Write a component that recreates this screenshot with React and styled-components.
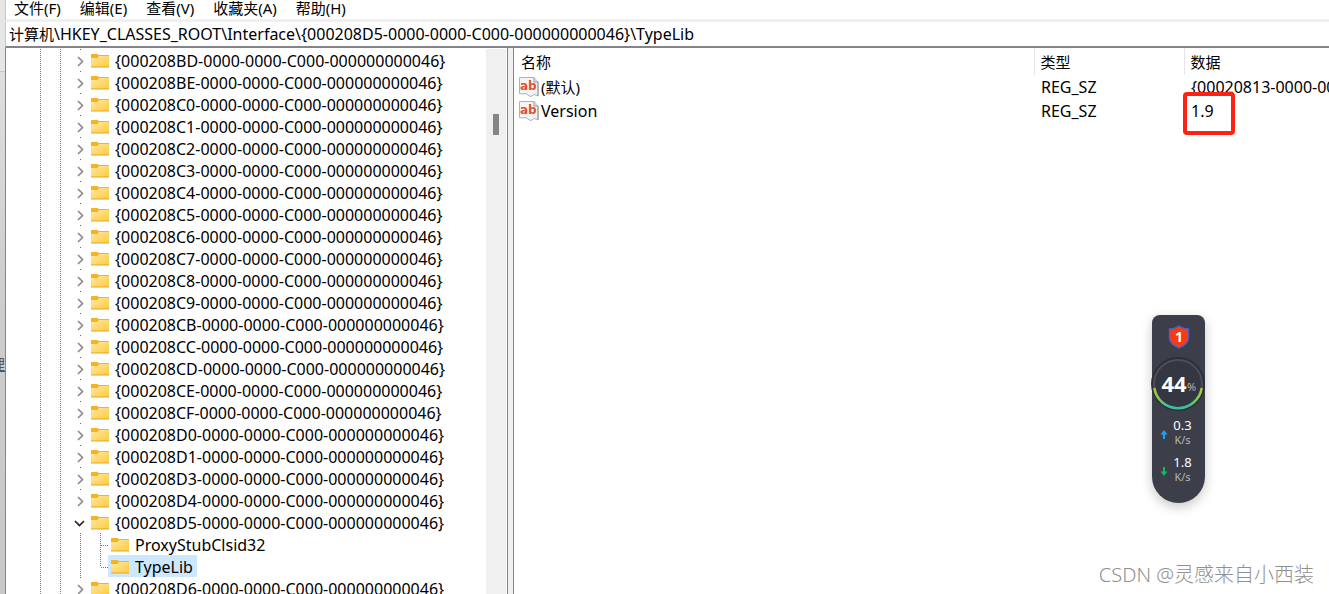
import React from 'react';
import styled, { createGlobalStyle, css } from 'styled-components';

const Global = createGlobalStyle`
  * { box-sizing: border-box; }
  html, body { margin: 0; height: 100%; overflow: hidden; }
  #root { height: 100%; }
  body {
    font-family: 'Noto Sans', 'Noto Sans CJK SC', sans-serif;
    font-size: 16px;
    line-height: 22px;
    color: #000;
    background: #fff;
  }
  button { font: inherit; color: inherit; border: 0; padding: 0; background: none; text-align: left; }
`;

const Screen = styled.div`
  position: relative;
  display: flex;
  height: 100vh;
  overflow: hidden;
`;

const Backdrop = styled.div`
  flex: none;
  width: 5px;
  overflow: hidden;
  display: flex;
  flex-direction: column;
  background: linear-gradient(#e4e4e4, #cdcdcd 50%, #c8c8c8);
`;

const BackdropTop = styled.div`
  height: 72px;
  border-bottom: 1px solid #c4c4c4;
  background: #e6e6e6;
`;

const BackdropText = styled.span`
  margin-top: 281px;
  align-self: flex-end;
  font-size: 15px;
  color: #555;
  text-decoration: underline;
`;

const Window = styled.main`
  flex: 1;
  min-width: 0;
  display: flex;
  flex-direction: column;
`;

const MenuBar = styled.nav`
  flex: none;
  display: flex;
  gap: 19px;
  height: 22px;
  padding: 0 8px;
  border-left: 1px solid #c6c6ca;
  border-bottom: 3px solid #f0f0f0;
`;

const MenuItem = styled.button`
  height: 16px;
  font-size: 15px;
  line-height: 16px;
  white-space: nowrap;
`;

const Address = styled.div`
  flex: none;
  height: 26px;
  padding: 1px 3px;
  border-left: 1px solid #c6c6ca;
  border-bottom: 2px solid #84848a;
  white-space: nowrap;
`;

const Han = styled.span`
  font-size: 15px;
`;

const Panes = styled.div`
  flex: 1;
  min-height: 0;
  display: flex;
  border-left: 1px solid #84848a;
`;

const TreePane = styled.section`
  flex: none;
  width: 502px;
  display: flex;
  border-right: 1px solid #84848a;
`;

const Tree = styled.ul`
  flex: 1;
  margin: 0;
  padding: 1px 0 0;
  list-style: none;
  overflow: hidden;
`;

const dots = 'repeating-linear-gradient(#777 0 1px, transparent 1px 2px)';

const TreeRow = styled.li`
  display: flex;
  height: 22px;
  padding-left: 54px;
  background: ${dots} 34px 0 / 1px 100% no-repeat, ${dots} 54px 0 / 1px 100% no-repeat;
`;

const Guide = styled.svg`
  flex: none;
  width: 48px;
  height: 22px;
`;

const Toggle = styled.button`
  flex: none;
  width: 30px;
  height: 22px;

  svg { display: block; }
`;

const TreeLabel = styled.button`
  display: flex;
  align-items: center;
  gap: 5px;
  padding: 2px 4px 0 ${(p) => (p.$child ? 3 : 1)}px;
  line-height: 20px;
  white-space: nowrap;
  border-radius: 1px;
  ${(p) => p.$selected && css`background: #cce8ff;`}
`;

const FolderSvg = styled.svg`
  flex: none;
  width: 19px;
  height: 16px;
`;

const ScrollTrack = styled.div`
  flex: none;
  width: 20px;
  margin: 1px 1px 0 0;
  padding-top: 65px;
  background: #f0f0f0;
`;

const ScrollThumb = styled.div`
  width: 6px;
  height: 21px;
  margin-left: 7px;
  background: #858585;
`;

const Splitter = styled.div`
  flex: none;
  width: 5px;
  background: #f0f0f0;
`;

const ValuePane = styled.section`
  flex: 1;
  min-width: 0;
  overflow: hidden;
  border-left: 1px solid #84848a;
`;

const ValueTable = styled.table`
  width: 100%;
  table-layout: fixed;
  border-collapse: collapse;
  white-space: nowrap;

  th, td { padding: 0 0 0 7px; height: 24px; text-align: left; overflow: hidden; }
  th { height: 27px; padding: 1px 0 0 6px; font-size: 15px; font-weight: 400; border-right: 1px solid #e5e5e5; }
  th:first-child { padding-left: 7px; }
  th:last-child { border-right: 0; }
  td:first-child { padding-left: 5px; }
`;

const NameCol = styled.col`width: 520px;`;
const TypeCol = styled.col`width: 150px;`;

const ValueName = styled.div`
  display: flex;
  align-items: center;
  gap: 2px;
  font-size: ${(p) => (p.$han ? 15 : 16)}px;
`;

const Highlight = styled.div`
  position: absolute;
  left: 1183px;
  top: 92px;
  width: 52px;
  height: 43px;
  border: 4px solid #ff2113;
  border-radius: 4px;
`;

const Monitor = styled.aside`
  position: absolute;
  right: 124px;
  top: 315px;
  width: 53px;
  height: 188px;
  display: flex;
  flex-direction: column;
  align-items: center;
  border-radius: 8px 8px 27px 27px;
  background: #3c3e49;
  color: #fff;
  box-shadow: 0 4px 12px rgba(0, 0, 0, 0.22);
`;

const Shield = styled.svg`
  flex: none;
  width: 22px;
  height: 24px;
  margin-top: 10px;
`;

const Gauge = styled.svg`
  flex: none;
  width: 55px;
  height: 55px;
  margin: 8px 0 6px;
`;

const Speed = styled.div`
  display: grid;
  grid-template-columns: 8px 22px;
  column-gap: 4px;
  align-items: center;
  align-content: start;
  width: 38px;
  height: 37px;

  svg { margin-top: 6px; }
`;

const Rate = styled.div`
  display: flex;
  flex-direction: column;
  align-items: center;
  font-size: 13px;
  line-height: 15px;

  small { font-size: 11px; line-height: 13px; color: #b4b5ba; }
`;

const Watermark = styled.div`
  position: absolute;
  right: 15px;
  bottom: 6px;
  font-size: 20px;
  line-height: 26px;
  font-weight: 300;
  color: #909090;
  white-space: nowrap;
`;

function Folder() {
  return (
    <FolderSvg viewBox="0 0 19 16" aria-hidden="true">
      <defs>
        <linearGradient id="folder" x1="0" y1="0" x2="1" y2="1">
          <stop offset="0" stopColor="#ffe8a3" />
          <stop offset="1" stopColor="#ffcb3d" />
        </linearGradient>
      </defs>
      <path d="M0 1.500Q0 1 .5 1H6q1 0 1.500 1h10q.5 0 .5.5V8H0z" fill="#f5b31c" />
      <path d="M0 5h6.500L8 3h10v11H0z" fill="url(#folder)" />
      <path d="M0 13.500h18v1H0z" fill="#e5a52a" />
    </FolderSvg>
  );
}

function Chevron({ open }) {
  return (
    <svg width="30" height="22" viewBox="0 0 30 22" aria-hidden="true">
      {open ? (
        <path d="M15 10l4.500 4.500L24 10" fill="none" stroke="#222" strokeWidth="1.700" />
      ) : (
        <>
          <path d="M18 8l4.500 4.500L18 17" fill="none" stroke="#8c8c8c" strokeWidth="1.700" />
          <path d="M20 0h1v1h-1z" fill="#666" />
        </>
      )}
    </svg>
  );
}

function StringIcon() {
  return (
    <svg width="20" height="20" viewBox="0 0 20 20" aria-hidden="true">
      <path d="M.5.5h14.500l4 4.500v14l-2-1-2-.5-3 2q-2-.5-3-1.500l-2-1.500-3.500.5-3-.5z" fill="#f4f4f4" stroke="#b0b0b0" />
      <path d="M15 .5V5h4" fill="#ddd" stroke="#999" />
      <path d="M19 5v14" stroke="#999" />
      <text x="1" y="13" fontFamily="DejaVu Sans" fontSize="12" fontWeight="700" fill="#dc5536">ab</text>
    </svg>
  );
}

const rows = ['BD', 'BE', 'C0', 'C1', 'C2', 'C3', 'C4', 'C5', 'C6', 'C7', 'C8', 'C9', 'CB', 'CC', 'CD', 'CE', 'CF', 'D0', 'D1', 'D3', 'D4', 'D5'];

function KeyRow({ id, open }) {
  return (
    <TreeRow>
      <Toggle aria-label={open ? 'Collapse' : 'Expand'}><Chevron open={open} /></Toggle>
      <TreeLabel><Folder />{`{000208${id}-0000-0000-C000-000000000046}`}</TreeLabel>
    </TreeRow>
  );
}

function ChildRow({ name, last, selected }) {
  return (
    <TreeRow>
      <Guide viewBox="0 0 48 22" aria-hidden="true">
        <path d={last ? 'M20.500 0v22M40.500 0v12M41 12.500h7' : 'M20.500 0v22M40.500 0v22M41 12.500h7'} fill="none" stroke="#777" strokeDasharray="1 1" />
      </Guide>
      <TreeLabel $child $selected={selected}><Folder />{name}</TreeLabel>
    </TreeRow>
  );
}

function SpeedRow({ up, value }) {
  return (
    <Speed>
      <svg width="8" height="10" viewBox="0 0 8 10" aria-hidden="true">
        <path d={up ? 'M4 0l3.500 4.500H5V9H3V4.500H.5z' : 'M4 9L.5 4.500H3V0h2v4.500h2.500z'} fill={up ? '#20a0f0' : '#10b860'} />
      </svg>
      <Rate><span>{value}</span><small>K/s</small></Rate>
    </Speed>
  );
}

export default function App() {
  return (
    <>
      <Global />
      <Screen>
        <Backdrop><BackdropTop /><BackdropText>理</BackdropText></Backdrop>
        <Window>
          <MenuBar>
            {['文件(F)', '编辑(E)', '查看(V)', '收藏夹(A)', '帮助(H)'].map((m) => <MenuItem key={m}>{m}</MenuItem>)}
          </MenuBar>
          <Address><Han>计算机</Han>{'\\HKEY_CLASSES_ROOT\\Interface\\{000208D5-0000-0000-C000-000000000046}\\TypeLib'}</Address>
          <Panes>
            <TreePane>
              <Tree>
                {rows.map((id) => <KeyRow key={id} id={id} open={id === 'D5'} />)}
                <ChildRow name="ProxyStubClsid32" />
                <ChildRow name="TypeLib" last selected />
                <KeyRow id="D6" />
              </Tree>
              <ScrollTrack><ScrollThumb /></ScrollTrack>
            </TreePane>
            <Splitter />
            <ValuePane>
              <ValueTable>
                <colgroup><NameCol /><TypeCol /><col /></colgroup>
                <thead><tr><th>名称</th><th>类型</th><th>数据</th></tr></thead>
                <tbody>
                  <tr><td><ValueName $han><StringIcon />(默认)</ValueName></td><td>REG_SZ</td><td>{'{00020813-0000-0000-C000-000000000046}'}</td></tr>
                  <tr><td><ValueName><StringIcon />Version</ValueName></td><td>REG_SZ</td><td>1.9</td></tr>
                </tbody>
              </ValueTable>
            </ValuePane>
          </Panes>
        </Window>
        <Highlight />
        <Monitor>
          <Shield viewBox="0 0 22 24" aria-hidden="true">
            <path d="M11 1c3 2 6 3 9.500 3v9c0 5-5 8-9.500 10C6.500 21 1.500 18 1.500 13V4C5 4 8 3 11 1z" fill="#f73c12" stroke="#4860c8" strokeWidth="1.500" />
            <text x="11" y="17" textAnchor="middle" fontSize="14" fontWeight="700" fill="#fff">1</text>
          </Shield>
          <Gauge viewBox="0 0 55 55">
            <defs>
              <linearGradient id="arc" x1="0" x2="1" y1="0" y2="0">
                <stop offset="0" stopColor="#a4cc38" />
                <stop offset=".3" stopColor="#38c0a0" />
                <stop offset=".7" stopColor="#38c0a0" />
                <stop offset="1" stopColor="#a4cc38" />
              </linearGradient>
            </defs>
            <circle cx="27" cy="27" r="27" fill="#2c2e39" />
            <circle cx="27" cy="27" r="24" fill="#343641" stroke="#4b4d58" strokeWidth="2" />
            <path d="M3.300 31a24 24 0 0 0 47.400 0" fill="none" stroke="url(#arc)" strokeWidth="2.500" />
            <text x="23" y="35" textAnchor="middle" fontSize="22" fontWeight="700" fill="#fff">44</text>
            <text x="36" y="34" fontSize="11" fill="#b4b5ba">%</text>
          </Gauge>
          <SpeedRow up value="0.3" />
          <SpeedRow value="1.8" />
        </Monitor>
        <Watermark>CSDN @灵感来自小西装</Watermark>
      </Screen>
    </>
  );
}
